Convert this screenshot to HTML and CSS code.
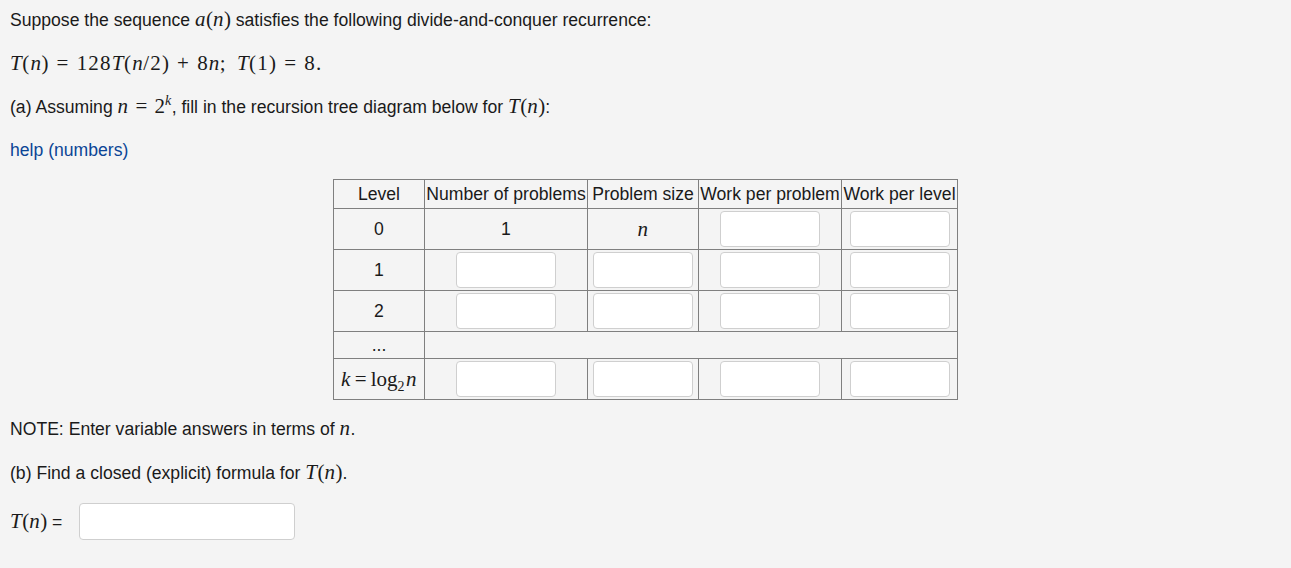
FILE: index.html
```html
<!DOCTYPE html>
<html lang="en">
<head>
  <meta charset="UTF-8" />
  <title>Recursion tree</title>
  <link rel="stylesheet" href="styles.css">
</head>
<body>
  <p>Suppose the sequence <span class="m">a</span><span class="mr">(</span><span class="m">n</span><span class="mr">)</span> satisfies the following divide-and-conquer recurrence:</p>

  <p class="eq"><span class="m">T</span>(<span class="m">n</span>)<span class="op">=</span>128<span class="m">T</span>(<span class="m">n</span>/2)<span class="op">+</span>8<span class="m">n</span>;<span class="sp"></span><span class="m">T</span>(1)<span class="op">=</span>8.</p>

  <p>(a) Assuming <span class="m">n</span><span class="mr op">=</span><span class="mr">2<sup class="m">k</sup></span>, fill in the recursion tree diagram below for <span class="m">T</span><span class="mr">(</span><span class="m">n</span><span class="mr">)</span>:</p>

  <p class="help-line"><a class="help" href="#">help (numbers)</a></p>

  <table class="tree">
    <tr>
      <th class="c-level">Level</th>
      <th class="c-num">Number of problems</th>
      <th class="c-size">Problem size</th>
      <th class="c-wpp">Work per problem</th>
      <th class="c-wpl">Work per level</th>
    </tr>
    <tr>
      <td>0</td>
      <td>1</td>
      <td><span class="m">n</span></td>
      <td><input type="text" /></td>
      <td><input type="text" /></td>
    </tr>
    <tr>
      <td>1</td>
      <td><input type="text" /></td>
      <td><input type="text" /></td>
      <td><input type="text" /></td>
      <td><input type="text" /></td>
    </tr>
    <tr>
      <td>2</td>
      <td><input type="text" /></td>
      <td><input type="text" /></td>
      <td><input type="text" /></td>
      <td><input type="text" /></td>
    </tr>
    <tr class="dots">
      <td>...</td>
      <td colspan="4"></td>
    </tr>
    <tr>
      <td class="klog"><span class="m">k</span><span class="mr op">=</span><span class="mr">log<sub>2</sub></span>&#8202;<span class="m">n</span></td>
      <td><input type="text" /></td>
      <td><input type="text" /></td>
      <td><input type="text" /></td>
      <td><input type="text" /></td>
    </tr>
  </table>

  <p class="note">NOTE: Enter variable answers in terms of <span class="m">n</span>.</p>

  <p>(b) Find a closed (explicit) formula for <span class="m">T</span><span class="mr">(</span><span class="m">n</span><span class="mr">)</span>.</p>

  <div class="answer">
    <span><span class="m">T</span><span class="mr">(</span><span class="m">n</span><span class="mr">)</span> =</span>
    <input type="text" class="wide" />
  </div>
</body>
</html>
```

FILE: styles.css
```css
body {
  margin: 0;
  padding: 8px 10px;
  background-color: #f4f4f4;
  color: #1a1a1a;
  font-family: "Liberation Sans", Arial, sans-serif;
  font-size: 17.6px;
}

p {
  margin: 0 0 20px;
  line-height: 23px;
}

.m {
  font-family: "Liberation Serif", "DejaVu Serif", serif;
  font-style: italic;
  font-size: 21px;
  letter-spacing: 0.5px;
}

.mr {
  font-family: "Liberation Serif", "DejaVu Serif", serif;
  font-size: 21px;
}

.eq {
  font-family: "Liberation Serif", "DejaVu Serif", serif;
  font-size: 21px;
  letter-spacing: 1.2px;
}

.op {
  margin: 0 7px;
}

.sp {
  display: inline-block;
  width: 10px;
}

sup, sub {
  line-height: 0;
}

sup.m,
sub {
  font-size: 14px;
}

.help-line {
  margin-bottom: 17px;
}

.help {
  color: #0b4596;
  text-decoration: none;
}

.tree {
  border-collapse: collapse;
  margin: 0 auto;
  text-align: center;
}

.tree th,
.tree td {
  border: 1px solid #7f7f7f;
  padding: 2px 0;
  font-weight: normal;
}

.tree th {
  padding: 5px 0;
  line-height: 18px;
}

.c-level { width: 90px; }
.c-num { width: 162px; }
.c-size { width: 110px; }
.c-wpp { width: 142px; }
.c-wpl { width: 115px; }

.tree tr.dots td {
  height: 22px;
  padding: 2px 0;
}

.klog {
  white-space: nowrap;
}

.klog .op {
  margin: 0 4px;
}

input {
  box-sizing: border-box;
  width: 100px;
  height: 36px;
  border: 1px solid #cfcfcf;
  border-radius: 4px;
  background: white;
  vertical-align: middle;
}

.note {
  margin-top: 17px;
}

.answer {
  display: flex;
  align-items: center;
  gap: 17px;
  margin-top: -2px;
}

.answer input.wide {
  width: 216px;
  height: 37px;
}
```
